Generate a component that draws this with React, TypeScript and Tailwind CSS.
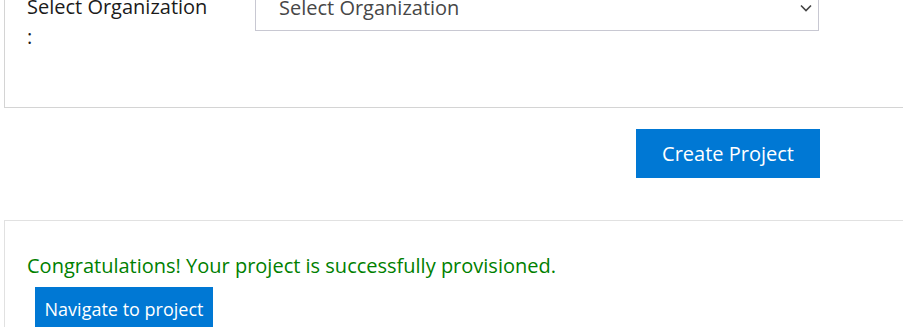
import React from "react";

export default function App() {
  return (
    <div
      className="w-[903px] h-[327px] overflow-hidden bg-white text-[#1b1b1b]"
      style={{ fontFamily: '"Open Sans", "Noto Sans", sans-serif' }}
    >
      <div className="-mt-[31px] pl-[4px] w-[960px]">
        <div className="border border-[#d4d4d4] pl-[22px] pt-[15px] pb-[55px]">
          <div className="flex items-start">
            <label className="mt-[7px] w-[228px] shrink-0 pr-[42px] text-[20px] leading-[30px] text-[#1b1b1b]">
              Select Organization :
            </label>
            <div className="relative w-[564px] shrink-0 h-[46px] border border-[#c8c8d2] bg-white flex items-center pl-[23px]">
              <span className="text-[20px] text-[#474747]">Select Organization</span>
              <svg
                className="absolute right-[6px] top-[18px]"
                width="12"
                height="8"
                viewBox="0 0 12 8"
              >
                <path d="M1 1.5 L6 6.5 L11 1.5" fill="none" stroke="#444" strokeWidth="1.6" />
              </svg>
            </div>
          </div>
        </div>
        <div className="flex w-[899px] justify-end pr-[83px] pt-[21px]">
          <button className="w-[184px] h-[49px] bg-[#0078d4] text-white text-[20px]">
            Create Project
          </button>
        </div>
        <div className="mt-[42px] border border-[#e1e1e1] pl-[22px] pt-[30px] pb-[20px]">
          <p className="text-[20px] leading-[30px] text-[#008000]">
            Congratulations! Your project is successfully provisioned.
          </p>
          <button className="mt-[6px] ml-[8px] w-[178px] h-[44px] bg-[#0078d4] text-white text-[18px]">
            Navigate to project
          </button>
        </div>
      </div>
    </div>
  );
}
